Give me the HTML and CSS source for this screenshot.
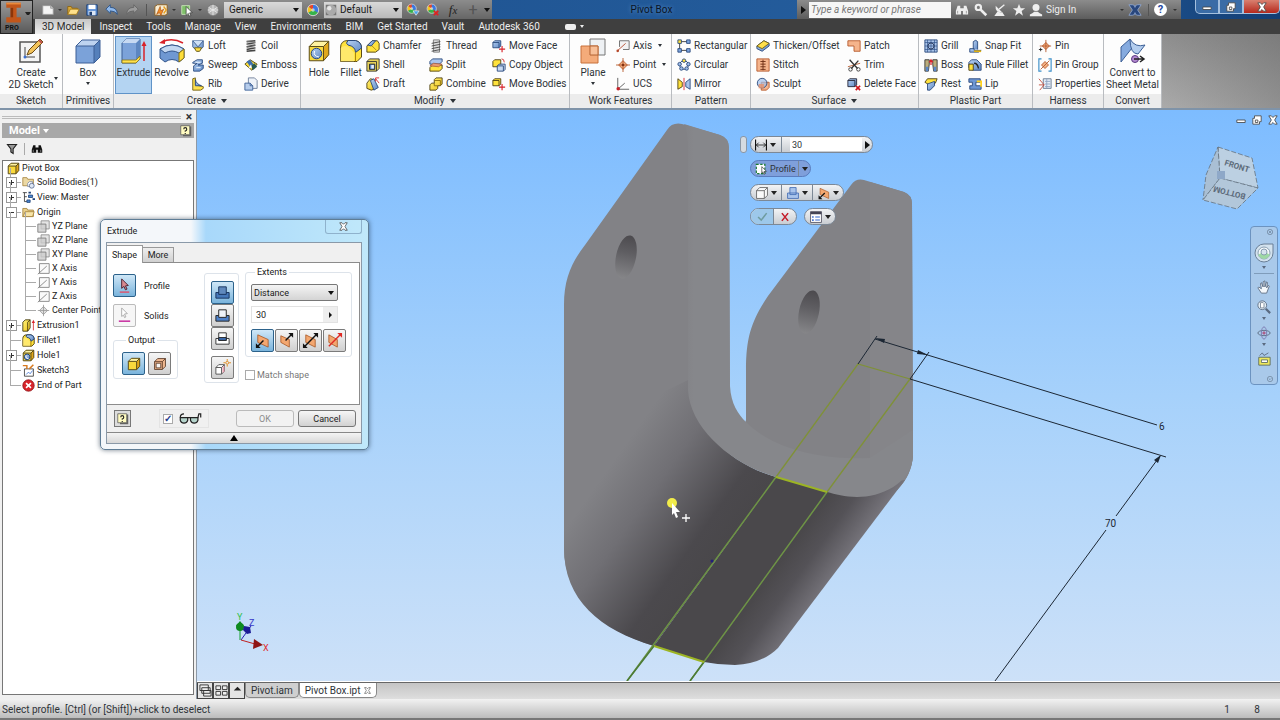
FILE: index.html
```html
<!DOCTYPE html>
<html lang="en">
<head>
    <meta charset="UTF-8">
    <meta name="viewport" content="width=device-width, initial-scale=1.0">
    <title>Pivot Box</title>
    <link rel="stylesheet" href="styles.css">
</head>
<body>
    <!-- Icon sprite -->
    <svg class="sprite" aria-hidden="true">
        <defs>
            <linearGradient id="gBlue" x1="0" y1="0" x2="1" y2="1"><stop offset="0" stop-color="#b9d2f2"/><stop offset="1" stop-color="#5d87c4"/></linearGradient>
            <linearGradient id="gYellow" x1="0" y1="0" x2="1" y2="1"><stop offset="0" stop-color="#fff27a"/><stop offset="1" stop-color="#eec41c"/></linearGradient>
        </defs>

        <symbol id="i-new" viewBox="0 0 16 16"><path d="M2 3h9l3 3v7H2z" fill="#f4f4f4" stroke="#999"/><path d="M11 3v3h3" fill="#ccc" stroke="#999"/></symbol>
        <symbol id="i-open" viewBox="0 0 16 16"><path d="M2 13V4h4l1 2h6v2" fill="#d9a93a" stroke="#8a6414"/><path d="M2 13l3-6h10l-3 6z" fill="#ffe08a" stroke="#a47a1c"/></symbol>
        <symbol id="i-save" viewBox="0 0 16 16"><path d="M2 2h12v12H2z" fill="#5b8fd6" stroke="#1f3f70"/><path d="M4 2h8v5H4z" fill="#fff"/><path d="M4 9h8v5H4z" fill="#dce6f4"/><path d="M5 10h3v4H5z" fill="#1f3f70"/></symbol>
        <symbol id="i-undo" viewBox="0 0 16 16"><path d="M1 7l5-5v3q8 0 8 8-2-4-8-4v3z" fill="#8fb8ea" stroke="#2a5288"/></symbol>
        <symbol id="i-redo" viewBox="0 0 16 16"><path d="M15 7l-5-5v3q-8 0-8 8 2-4 8-4v3z" fill="#9b9b9b" stroke="#666"/></symbol>
        <symbol id="i-update" viewBox="0 0 16 16"><path d="M1 4l3-2h11v11l-3 1H1z" fill="#f6ecd4" stroke="#8a5a1a"/><path d="M3 13l4-9 1 5 3-2-3 7-2-3z" fill="#f08a24" stroke="#a94a08" stroke-width=".7"/><path d="M11 4l3 4-3 4" fill="none" stroke="#e8a020" stroke-width="1.500"/></symbol>
        <symbol id="i-pick" viewBox="0 0 16 16"><path d="M2 3h9v10H2z" fill="#7fc06a" stroke="#c8e4b8"/><path d="M7 4l7 7-3 .3 1.500 3-2 .7-1-3-2.500 2z" fill="#fff" stroke="#333" stroke-width=".8"/></symbol>
        <symbol id="i-mat" viewBox="0 0 16 16"><circle cx="8" cy="8" r="6.500" fill="#b5b5b5" stroke="#777"/><path d="M3 5l10 6M3 11l10-6M8 2v12M2 8h12" stroke="#e9e9e9"/></symbol>
        <symbol id="i-wheel" viewBox="0 0 16 16"><path d="M8 8V1.500A6.500 6.500 0 0 1 13.600 11.200z" fill="#3c78e0"/><path d="M8 8l5.600 3.200A6.500 6.500 0 0 1 2.400 11.200z" fill="#35b34a"/><path d="M8 8l-5.600 3.200A6.500 6.500 0 0 1 3 4z" fill="#f4c520"/><path d="M8 8L3 4a6.500 6.500 0 0 1 5-2.500z" fill="#e8452a"/><circle cx="8" cy="8" r="6.500" fill="none" stroke="#ddd"/><circle cx="8" cy="8" r="2" fill="#fff" fill-opacity=".6"/></symbol>
        <symbol id="i-wheel-add" viewBox="0 0 16 16"><use href="#i-wheel" width="13" height="13"/><path d="M8 9h7l-3.500 5z" fill="#4aa3e8" stroke="#fff" stroke-width=".7"/></symbol>
        <symbol id="i-wheel-del" viewBox="0 0 16 16"><use href="#i-wheel" width="13" height="13"/><path d="M9 9l5 5m0-5l-5 5" stroke="#e02020" stroke-width="2"/></symbol>
        <symbol id="i-sphere" viewBox="0 0 16 16"><path d="M2 2h12v12H2z" fill="#777"/><circle cx="8" cy="8" r="6" fill="#aaa"/><circle cx="6" cy="6" r="2.500" fill="#e6e6e6"/></symbol>

        <symbol id="i-bino" viewBox="0 0 16 16"><path d="M3 3h3v3h4V3h3l2 6v4H9V9H7v4H1V9z" fill="currentColor"/><path d="M3 9v3M13 9v3" stroke="#999"/></symbol>
        <symbol id="i-key" viewBox="0 0 16 16"><circle cx="5" cy="5" r="3" fill="none" stroke="currentColor" stroke-width="2.500"/><path d="M7 7l7 7" stroke="currentColor" stroke-width="3"/></symbol>
        <symbol id="i-dish" viewBox="0 0 16 16"><path d="M3 3q-1 8 8 8z" fill="currentColor"/><path d="M7 7l6-5M6 10l-3 4h9l-2-3" stroke="currentColor" stroke-width="1.500" fill="currentColor"/></symbol>
        <symbol id="i-star" viewBox="0 0 16 16"><path d="M8 1l2 5h5l-4 3 1.500 5.500L8 11l-4.500 3.500L5 9 1 6h5z" fill="currentColor"/></symbol>
        <symbol id="i-user" viewBox="0 0 16 16"><circle cx="8" cy="5" r="4" fill="currentColor"/><path d="M1 15v-2q3-1 5-3h4q2 2 5 3v2z" fill="currentColor"/></symbol>
        <symbol id="i-exchange" viewBox="0 0 16 16"><path d="M1 2h4q3 0 3 3 0-3 3-3h4l-4 6 4 6h-4q-3 0-3-3 0 3-3 3H1l4-6z" fill="#29477d" stroke="#9db6df" stroke-width=".8"/></symbol>

        <symbol id="i-sketch" viewBox="0 0 26 26"><path d="M2 4h20v20H2z" fill="#f4f4f4" stroke="#555" stroke-width="1.500"/><path d="M7 9v10h10" fill="none" stroke="#444"/><circle cx="7" cy="19" r="1.500" fill="#3b6fd0"/><path d="M9 17l2-5L22 1l3 3-11 11z" fill="#f2c25a" stroke="#6a4a14"/><path d="M21 2l3 3" stroke="#c05050" stroke-width="2"/></symbol>
        <symbol id="i-box" viewBox="0 0 26 26"><path d="M1 8l6-6h18v17l-6 6H1z" fill="#7ba2d9"/><path d="M1 8l6-6h18l-6 6z" fill="#bdd3f0"/><path d="M19 8l6-6v17l-6 6z" fill="#5580bb"/><path d="M1 8l6-6h18v17l-6 6H1zM1 8h18v17M19 8l6-6" fill="none" stroke="#3c5f96"/></symbol>
        <symbol id="i-extrude" viewBox="0 0 26 26"><path d="M1 5l4-4h14v20l-4 4H1z" fill="#7ba2d9" stroke="#3c5f96"/><path d="M15 5l4-4v20l-4 4z" fill="#5c86c0"/><path d="M1 5l4-4h14l-4 4z" fill="#c6d9f2"/><path d="M1 22h14l4-4v3l-4 4H1z" fill="#ffe14c" stroke="#8a7312" stroke-width=".8"/><path d="M23 23V6" stroke="#d8232a" stroke-width="1.500"/><path d="M20.500 8L23 3l2.500 5z" fill="#d8232a"/></symbol>
        <symbol id="i-revolve" viewBox="0 0 26 26"><path d="M1 11q12-8 24 0v9l-5 4q-7-5-14 0l-5-4z" fill="#6f98d2" stroke="#33568c"/><path d="M1 11q12-8 24 0l-5 4q-7-4-14 0z" fill="#c4d8f1" stroke="#33568c"/><path d="M20 15l5-4v9l-5 4z" fill="#ffdf3a" stroke="#8a7312"/><path d="M3 4q10-5 21 1" fill="none" stroke="#d8232a" stroke-width="1.500"/><path d="M0 5l6-4v5z" fill="#d8232a"/></symbol>
        <symbol id="i-loft" viewBox="0 0 16 16"><path d="M2 2h12v7l-5 5H7L2 9z" fill="url(#gBlue)" stroke="#33568c"/><path d="M4 10h8l-2 4H6z" fill="#ffe14c" stroke="#756010"/><path d="M2 2l6 7 6-7" fill="#cfe0f5" stroke="#33568c"/></symbol>
        <symbol id="i-sweep" viewBox="0 0 16 16"><path d="M2 5l5-3h6v4L8 8h6v4l-4 3H3V9l4-3H2z" fill="url(#gBlue)" stroke="#28487c"/><path d="M5 5h6M6 11h5" stroke="#d9e7f8" stroke-width="1.500"/></symbol>
        <symbol id="i-rib" viewBox="0 0 16 16"><path d="M2 2l3-1v8l9 2v2l-3 2H2z" fill="#ffe14c" stroke="#6d5a10"/><path d="M5 3q1 5 7 7H5z" fill="url(#gBlue)" stroke="#28487c"/></symbol>
        <symbol id="i-coil" viewBox="0 0 16 16"><path d="M3 3l10-1M3 6l10-2M3 9l10-2M3 12l10-2M3 14l10-1" stroke="#444" stroke-width="2"/><path d="M3 3l10 1M3 6l10 1M3 9l10 1" stroke="#999" stroke-width=".8"/></symbol>
        <symbol id="i-emboss" viewBox="0 0 16 16"><path d="M1 7l6-5 8 5-6 7z" fill="#ffdf3a" stroke="#4b4210"/><path d="M3 4l4-2 4 5-4 3z" fill="#3c6fb0"/><path d="M8 9l4-3 3 4-5 4z" fill="#2a5a50"/><path d="M5 12l3-5 1 4z" fill="#fff"/></symbol>
        <symbol id="i-derive" viewBox="0 0 16 16"><path d="M5 1h7l3 3v9H5z" fill="#eef2f8" stroke="#6a7a96"/><path d="M1 7h6l3 3v5H1z" fill="#b7cdec" stroke="#3c5f96"/><path d="M7 7v3h3" fill="none" stroke="#3c5f96"/></symbol>

        <symbol id="i-ybox" viewBox="0 0 16 16"><path d="M1.500 5l3.500-3.500h9.500v9L11 14.500H1.500z" fill="#f9d93c"/><path d="M1.500 5L5 1.500h9.500L11 5z" fill="#fff3a0"/><path d="M11 5l3.500-3.500v9L11 14.500z" fill="#e0a81c"/><path class="hair" d="M1.500 5L5 1.500h9.500v9L11 14.500H1.500zM1.500 5H11v9.500M11 5l3.500-3.500" fill="none" stroke="#5c4d18"/></symbol>
        <symbol id="i-hole" viewBox="0 0 16 16"><use href="#i-ybox" width="16" height="16"/><circle class="hair" cx="6.300" cy="9.700" r="3.500" fill="url(#gBlue)" stroke="#28487c"/><path class="hair" d="M5 8q-1 3.500 3 4" fill="none" stroke="#fff"/></symbol>
        <symbol id="i-fillet" viewBox="0 0 16 16"><path class="hair" d="M1 6q0-5 5-5h5q4 1 4 5v6l-3 3H1z" fill="#ffe23c" stroke="#5c4d18"/><path d="M1 6q2-2 5-1l4 4v6H1z" fill="#fff09a" fill-opacity=".5"/><path class="hair" d="M6 1h5q4 1 4 5l-4 3q0-4-5-5-2-1 0-3z" fill="url(#gBlue)" stroke="#28487c"/><path class="hair" d="M11 9v6" stroke="#a8840f"/></symbol>
        <symbol id="i-chamfer" viewBox="0 0 16 16"><path d="M1 8l6-6h6l2 3v7l-4 3H1z" fill="#ffe23c" stroke="#4a3d10"/><path d="M2 7l5-5h4L6 8z" fill="url(#gBlue)" stroke="#28487c"/><path d="M7 8l5 5" stroke="#a8840f"/></symbol>
        <symbol id="i-shell" viewBox="0 0 16 16"><path d="M1 4l3-3h11v11l-3 3H1z" fill="#e6d25a" stroke="#333"/><path d="M1 4h11v11" fill="none" stroke="#333"/><path d="M4 7h6v6H4z" fill="#5a88c8" stroke="#222"/><path d="M6 8h3v4H6z" fill="#e8eef8"/></symbol>
        <symbol id="i-draft" viewBox="0 0 16 16"><path d="M1 7l4-5 4 1v11l-3 1-5-2z" fill="url(#gYellow)" stroke="#4a3d10"/><path d="M5 4l4-2 5 10-5 3z" fill="url(#gBlue)" stroke="#28487c"/><path d="M11 2l4 5M11 5V1h4" stroke="#d8232a" fill="none"/></symbol>
        <symbol id="i-thread" viewBox="0 0 16 16"><path d="M5 1h7v14H5z" fill="#dcdcdc" stroke="#777"/><path d="M3 5l10-2M3 8l10-2M3 11l10-2M3 14l10-2" stroke="#444"/></symbol>
        <symbol id="i-split" viewBox="0 0 16 16"><path d="M1 11l3-3h11v4l-3 3H1z" fill="#ffe23c" stroke="#4a3d10"/><path d="M1 4l3-3h11v3l-3 3H1z" fill="#a8c4ec" stroke="#28487c"/><path d="M1 9l4-3 10 1-4 3z" fill="#e89a70" stroke="#9c4a26" stroke-width=".7"/></symbol>
        <symbol id="i-combine" viewBox="0 0 16 16"><path d="M1 9l2-2h3V3l2-2h7v7l-2 2h-3v3l-2 2H1z" fill="url(#gYellow)" stroke="#4a3d10"/><path d="M6 7v3h4M6 4h7v6" fill="none" stroke="#8a6d0c"/></symbol>
        <symbol id="i-moveface" viewBox="0 0 16 16"><path d="M1 4l2-2h7v6l-2 2H1z" fill="url(#gBlue)" stroke="#28487c"/><path d="M1 4h7v6" fill="none" stroke="#28487c"/><path d="M11.500 8v7M8 11.500h7" stroke="#d8232a" stroke-width="1.300"/></symbol>
        <symbol id="i-copyobj" viewBox="0 0 16 16"><path d="M1 4l2-2h7v6l-2 2H1z" fill="#ffe23c" stroke="#4a3d10"/><path d="M6 9l2-2h7v6l-2 2H6z" fill="#c7d9f2" stroke="#28487c"/><path d="M6 9h7v6" fill="none" stroke="#28487c"/><path d="M11 1q3 0 3 4" fill="none" stroke="#d8232a"/></symbol>
        <symbol id="i-movebody" viewBox="0 0 16 16"><path d="M1 4l2-2h7v6l-2 2H1z" fill="#ffe23c" stroke="#4a3d10"/><path d="M1 4h7v6" fill="none" stroke="#4a3d10"/><path d="M11.500 8v7M8 11.500h7" stroke="#d8232a" stroke-width="1.300"/></symbol>

        <symbol id="i-plane" viewBox="0 0 26 26"><path d="M10 1h15v16H10z" fill="#eef1f4" stroke="#777"/><path d="M1 8h17v17H1z" fill="#f3a26c" fill-opacity=".9" stroke="#c8703a"/><path d="M10 8h8v9h-8z" fill="#f7bf98" stroke="#b56434"/></symbol>
        <symbol id="i-axis" viewBox="0 0 16 16"><path d="M4 9V2h11v10H8" fill="#f2f2f2" stroke="#666"/><path d="M1 14L11 5" stroke="#b5482a"/><circle cx="2" cy="13.500" r="1.500" fill="#b5482a"/></symbol>
        <symbol id="i-point" viewBox="0 0 16 16"><path d="M8 3l5 5-5 5-5-5z" fill="#f4b183" stroke="#b5582a"/><path d="M8 0v16M0 8h16" stroke="#b5582a"/><circle cx="8" cy="8" r="1.500" fill="#803010"/></symbol>
        <symbol id="i-ucs" viewBox="0 0 16 16"><path d="M2 1v13h13M2 14l8-7" fill="none" stroke="#555"/><circle cx="2.500" cy="13.500" r="2" fill="#c82028"/></symbol>
        <symbol id="i-rect" viewBox="0 0 16 16"><path d="M4 3h8M3 4v8M4 13h8" stroke="#333"/><g fill="#7fa7e0" stroke="#28487c"><path d="M1 1h4v4H1z" fill="#ffe23c"/><path d="M11 1h4v4h-4zM1 11h4v4H1zM11 11h4v4h-4z"/></g></symbol>
        <symbol id="i-circ" viewBox="0 0 16 16"><circle cx="8" cy="8" r="5" fill="none" stroke="#28487c"/><g fill="#9fbde8" stroke="#28487c"><circle cx="8" cy="3" r="2" fill="#ffe23c"/><circle cx="13" cy="7" r="2"/><circle cx="3" cy="7" r="2"/><circle cx="5" cy="12" r="2"/><circle cx="11" cy="12" r="2"/></g></symbol>
        <symbol id="i-mirror" viewBox="0 0 16 16"><path d="M1 2l5 4v5l-5 3z" fill="#ffe23c" stroke="#4a3d10"/><path d="M15 2l-5 4v5l5 3z" fill="#a8c4ec" stroke="#28487c"/><path d="M8 1v14" stroke="#d8232a"/></symbol>

        <symbol id="i-thicken" viewBox="0 0 16 16"><path d="M1 8l8-6 6 3v3l-8 6-6-3z" fill="url(#gBlue)" stroke="#28487c"/><path d="M1 8l8-6 6 3-8 6z" fill="#ffdf4a" stroke="#6d5a10"/></symbol>
        <symbol id="i-stitch" viewBox="0 0 16 16"><path d="M1 1h14v14H1z" fill="#f5b48c" stroke="#b5582a"/><path d="M8 2v12M5 4h6M5 7h6M5 10h6M5 13h6" stroke="#6a2a10"/></symbol>
        <symbol id="i-sculpt" viewBox="0 0 16 16"><path d="M6 6h9v6l-3 3H6z" fill="#f5b48c" stroke="#b5582a"/><circle cx="7" cy="7" r="5.500" fill="#9fbde8" fill-opacity=".7" stroke="#28487c"/><path d="M3 8h6v5H3z" fill="#e9926a" fill-opacity=".8"/></symbol>
        <symbol id="i-patch" viewBox="0 0 16 16"><path d="M1 2h14v12H8V8H1z" fill="#f5b48c" stroke="#b5582a"/></symbol>
        <symbol id="i-trim" viewBox="0 0 16 16"><path d="M1 10l14-4" stroke="#b5582a"/><path d="M3 2l9 10M13 3L5 12" stroke="#333" stroke-width="1.500"/><circle cx="4" cy="13" r="2" fill="none" stroke="#333"/><circle cx="13" cy="13" r="2" fill="none" stroke="#333"/></symbol>
        <symbol id="i-delface" viewBox="0 0 16 16"><path d="M1 4l2-2h8v7l-2 2H1z" fill="url(#gBlue)" stroke="#223"/><path d="M1 4h8v7" fill="none" stroke="#223"/><path d="M10 10l5 5m0-5l-5 5" stroke="#d01820" stroke-width="2"/></symbol>

        <symbol id="i-grill" viewBox="0 0 16 16"><path d="M1 1h14v14H1z" fill="#a8c2e8" stroke="#28487c"/><path d="M4 1v14M8 1v14M12 1v14M1 4h14M1 8h14M1 12h14" stroke="#33568c" stroke-width=".8"/><circle cx="8" cy="8" r="3.500" fill="none" stroke="#1c2c50"/></symbol>
        <symbol id="i-boss" viewBox="0 0 16 16"><path d="M1 2h5v5l-1 8H1zM10 2h5v13h-4l-1-8z" fill="#bcae7c" stroke="#333"/><path d="M2 10h3v5H2zM11 10h3v5h-3z" fill="#5a88c8"/><path d="M8 8V3M6 5l2-3 2 3" stroke="#d8232a" stroke-width="1.400" fill="none"/></symbol>
        <symbol id="i-rest" viewBox="0 0 16 16"><path d="M1 6l3-4h11l-2 5-7 2z" fill="#ffe23c" stroke="#4a3d10"/><path d="M4 8l8-3v5l-5 5H4z" fill="url(#gBlue)" stroke="#28487c"/></symbol>
        <symbol id="i-snap" viewBox="0 0 16 16"><path d="M6 12V3q3-3 5 0v9" fill="url(#gBlue)" stroke="#28487c"/><path d="M2 11h5v2h8l-3 2H2z" fill="#9fbde8" stroke="#28487c"/><path d="M7 14h8" stroke="#e0b010" stroke-width="2"/></symbol>
        <symbol id="i-rule" viewBox="0 0 16 16"><path d="M1 5l3-3h6l5 5v7H6l-5-3z" fill="url(#gBlue)" stroke="#28487c"/><path d="M1 7h5v7H1z" fill="#ffe23c" stroke="#4a3d10"/><path d="M7 6q4 0 5 6" fill="none" stroke="#222" stroke-width="1.500"/></symbol>
        <symbol id="i-lip" viewBox="0 0 16 16"><path d="M1 2h13v4H9v4h6v4H2v-4h3V6H1z" fill="#6e97d4" stroke="#28487c"/><path d="M10 5h5v6" fill="none" stroke="#ffd21c" stroke-width="2"/></symbol>
        <symbol id="i-pin" viewBox="0 0 16 16"><path d="M9 4l4 4-4 4-4-4z" fill="#f4b183" stroke="#b5582a"/><path d="M9 1v14M2 8h13" stroke="#b5582a"/><path d="M1 12h4M3 10v4" stroke="#222"/></symbol>
        <symbol id="i-pingroup" viewBox="0 0 16 16"><path d="M4 1H1v14h3M12 1h3v14h-3" fill="none" stroke="#3c8fc8" stroke-width="1.300"/><path d="M8 4l4 4-4 4-4-4z" fill="#f4b183" stroke="#b5582a"/><path d="M3 13L13 3" stroke="#b5582a"/></symbol>
        <symbol id="i-props" viewBox="0 0 16 16"><path d="M6 2h9v11H6z" fill="#e6ecf5" stroke="#66788f"/><path d="M8 5h6M8 8h6M8 11h6M10 2v11" stroke="#8fa3c4"/><path d="M1 2l6 7-5 6M1 9h6" fill="none" stroke="#c04a3a"/></symbol>
        <symbol id="i-sheet" viewBox="0 0 26 26"><path d="M1 9L10 1l2 9L1 24z" fill="#86abdf" stroke="#3c5f96"/><path d="M10 1q5 9 15 6l-7 9q-8 0-8-15z" fill="#b3cdee" stroke="#3c5f96"/><circle cx="15" cy="21" r="3.500" fill="#b48ad0" stroke="#5a3a80"/><path d="M14 21h9M20 18l4 3-4 3" fill="none" stroke="#222" stroke-width="1.500"/></symbol>

        <symbol id="i-folder" viewBox="0 0 16 16"><path d="M1 13V3h5l1 2h7v8z" fill="#e9d08c" stroke="#a4813a"/><path d="M1 13l3-6h11l-2 6z" fill="#f7e4a8" stroke="#a4813a"/></symbol>
        <symbol id="i-bodies" viewBox="0 0 16 16"><path d="M1 12V2h5l1 2h7v8z" fill="#ecd9a4" stroke="#a4813a"/><path d="M7 9l2-2h4v6H7z" fill="#fff" stroke="#7c8aa6"/><circle cx="12" cy="12" r="3" fill="#dfe8f5" stroke="#56688c"/></symbol>
        <symbol id="i-view" viewBox="0 0 16 16"><path d="M1 2h5M3 2v11h3M3 7h3" stroke="#333" fill="none"/><path d="M8 5h5v3H8zM6 11h4v3H6z" fill="#4f8bd6" stroke="#1e4278"/><path d="M13 10h3M8 2h3" stroke="#1e4278" stroke-width="2"/></symbol>
        <symbol id="i-gplane" viewBox="0 0 16 16"><path d="M5 1h10v10H5z" fill="#e4e4e4" stroke="#888"/><path d="M1 5h10v10H1z" fill="#ccc" fill-opacity=".8" stroke="#777"/></symbol>
        <symbol id="i-gaxis" viewBox="0 0 16 16"><path d="M3 2h12v12H3z" fill="#fafafa" stroke="#777"/><path d="M1 15L12 5" stroke="#777"/></symbol>
        <symbol id="i-gpoint" viewBox="0 0 16 16"><path d="M8 3l5 5-5 5-5-5z" fill="#e0e0e0" stroke="#999"/><path d="M8 1v14M1 8h14" stroke="#999"/></symbol>
        <symbol id="i-textr" viewBox="0 0 16 16"><path d="M1 4l3-3h6v10l-3 4H1z" fill="url(#gYellow)" stroke="#332b08"/><path d="M7 4v11M7 4l3-3" stroke="#332b08"/><path d="M14 14V4" stroke="#d8232a"/><path d="M12 5l2-4 2 4z" fill="#d8232a"/></symbol>
        <symbol id="i-tsketch" viewBox="0 0 16 16"><path d="M3 6h11v9H3z" fill="#fff" stroke="#333"/><path d="M5 13l3-3 2 2 3-4" fill="none" stroke="#3b6fd0"/><path d="M1 2h5v4M9 6l5-5" stroke="#d87a20" stroke-width="1.800" fill="none"/></symbol>
        <symbol id="i-end" viewBox="0 0 16 16"><circle cx="8" cy="8" r="7" fill="#d9262c" stroke="#8c1014"/><path d="M5 5l6 6m0-6l-6 6" stroke="#fff" stroke-width="2"/></symbol>
        <symbol id="i-filter" viewBox="0 0 16 16"><path d="M2 2h12L9.500 8v6L6.500 12V8z" fill="#999" stroke="#222" stroke-width="1.500"/></symbol>
        <symbol id="i-help" viewBox="0 0 16 16"><path d="M4 2h11v13H4z" fill="#666"/><path d="M1 1h12v12H1z" fill="#fffbc0" stroke="#555"/><path d="M5 5.500q0-2 2-2t2 2-2 2.500v1M7 10.500v1.500" fill="none" stroke="#222" stroke-width="1.500"/></symbol>

        <symbol id="i-cursor" viewBox="0 0 18 18"><path d="M6 2l7 7-3 .4 1.700 3.400-1.700.7L8.400 10 6 12z" fill="#d98a90" stroke="#4a2030"/><path d="M4 16h10" stroke="#e0506a" stroke-width="1.500"/></symbol>
        <symbol id="i-cursor-off" viewBox="0 0 18 18"><path d="M6 1l6 6-3 .4 1.500 3.100-1.500.7L8 8.600 6 10z" fill="#fff" stroke="#aaa"/><path d="M3 15h12" stroke="#c4209a" stroke-width="1.500"/></symbol>
        <symbol id="i-join" viewBox="0 0 18 18"><path d="M2 9h14v6H2z" fill="#4577b8" stroke="#16325c"/><path d="M5 3h8v8H5z" fill="#6089bd" stroke="#16325c"/></symbol>
        <symbol id="i-cut" viewBox="0 0 18 18"><path d="M2 9h14v6H2z" fill="#4d80c8" stroke="#222"/><path d="M5 3h8v8H5z" fill="#eef2f8" stroke="#222"/></symbol>
        <symbol id="i-intersect" viewBox="0 0 18 18"><path d="M2 9h14v6H2zM5 3h8v8H5z" fill="#fff" stroke="#333"/><path d="M5 8h8v3H5z" fill="#3d6fb4" stroke="#222"/></symbol>
        <symbol id="i-newsolid" viewBox="0 0 18 18"><path d="M2 9l3-3h6v7l-3 3H2zM2 9h6v7M8 9l3-3" fill="#fff" stroke="#555"/><path d="M9 9l2-2v6l-2 2z" fill="#e8a0b0"/><circle cx="14" cy="4" r="1.500" fill="none" stroke="#e08a20"/><path d="M14 0v2M14 6v2M10 4h2M16 4h2" stroke="#e08a20"/></symbol>
        <symbol id="i-surf" viewBox="0 0 18 18"><path d="M2 6l4-4h10v10l-4 4H2z" fill="#f0b890" stroke="#4a2a18"/><path d="M4 8h6v6H4z" fill="#f8f4f0" stroke="#4a2a18"/><path d="M2 6h10v10M12 6l4-4" fill="none" stroke="#4a2a18"/></symbol>
        <symbol id="i-dir1" viewBox="0 0 18 18"><path d="M4 3l11 5v8L4 11z" fill="#f3a770" stroke="#a4501c" stroke-width=".8"/><path d="M10 9l-6 6" stroke="#111" stroke-width="1.500"/><path d="M2 17v-5l5 5z" fill="#111"/></symbol>
        <symbol id="i-dir2" viewBox="0 0 18 18"><path d="M3 4l9 4v8L3 11z" fill="#f3a770" stroke="#a4501c" stroke-width=".8"/><path d="M8 9l6-6" stroke="#111" stroke-width="1.500"/><path d="M16 1v5l-5-5z" fill="#111"/></symbol>
        <symbol id="i-dir3" viewBox="0 0 18 18"><path d="M4 3l10 5v8L4 11z" fill="#f3a770" stroke="#a4501c" stroke-width=".8"/><path d="M3 15L15 3" stroke="#111" stroke-width="1.500"/><path d="M17 1v5l-5-5zM1 17v-5l5 5z" fill="#111"/></symbol>
        <symbol id="i-dir4" viewBox="0 0 18 18"><path d="M3 3l9 5v8L3 11z" fill="#f3a770" stroke="#a4501c" stroke-width=".8"/><path d="M3 15L15 3" stroke="#e02a24" stroke-width="1.500"/><path d="M17 1v5l-5-5z" fill="#e02a24"/></symbol>
        <symbol id="i-glasses" viewBox="0 0 26 14"><path d="M2 6h8v3q-1 3-4 3t-4-3zM13 6h8v3q-1 3-4 3t-4-3z" fill="#b5d4cc" stroke="#222" stroke-width="1.300"/><path d="M10 6h3M2 6q0-4 4-4M21 6l1-4h2v4" fill="none" stroke="#222" stroke-width="1.300"/></symbol>
        <symbol id="i-dim" viewBox="0 0 18 18"><path d="M2 2v14M16 2v14" stroke="#111" stroke-width="1.500"/><path d="M3 9h12M6 6L3 9l3 3M12 6l3 3-3 3" fill="none" stroke="#111"/></symbol>
        <symbol id="i-sel" viewBox="0 0 18 18"><path d="M3 3h11v12H3z" fill="#fff" stroke="#1c7a30" stroke-width="1.500" stroke-dasharray="3 2"/><path d="M10 6l6 6-3 .3 1.300 2.700-1.500.7-1.300-3-1.500 1.500z" fill="#fff" stroke="#222" stroke-width=".8"/></symbol>
        <symbol id="i-wbox" viewBox="0 0 18 18"><path d="M2 6l4-4h10v10l-4 4H2zM2 6h10v10M12 6l4-4" fill="#fafafa" stroke="#555"/></symbol>
        <symbol id="i-bjoin" viewBox="0 0 18 18"><path d="M2 9h14v7H2zM5 2h8v9H5z" fill="#a9c4ec" stroke="#3b66b0"/></symbol>
        <symbol id="i-opts" viewBox="0 0 18 18"><path d="M2 2h14v14H2z" fill="#fff" stroke="#445"/><path d="M2 4h14" stroke="#445" stroke-width="3"/><path d="M8 9h6M8 13h6" stroke="#36c" stroke-width="1.300"/><path d="M4 8h2v2H4zM4 12h2v2H4z" fill="#36c"/></symbol>
        <symbol id="i-winx" viewBox="0 0 12 12"><path d="M1 1h3l2 2 2-2h3L8 6l3 5H8L6 9l-2 2H1l3-5z" fill="#fff" stroke="#444"/></symbol>
        <symbol id="i-wmin" viewBox="0 0 12 12"><path d="M1 6h10v3H1z" fill="#fff" stroke="#444"/></symbol>
        <symbol id="i-wmax" viewBox="0 0 12 12"><path d="M3 1h8v7H9v3H1V4h2z" fill="#fff" stroke="#444"/><path d="M4 6h3v3H4z" fill="#fff" stroke="#444"/></symbol>
    </svg>

    <div class="app">
        <header class="header">
            <button class="app-menu" aria-label="Application menu">
                <svg class="app-logo" viewBox="0 0 24 28"><path d="M3 2h17v6h-5v11h5v6H3v-6h5V8H3z" fill="#c2561a"/><path d="M8 8h3v11H8z" fill="#8c3508"/><path d="M3 2h17v2H3z" fill="#ea8a3c"/></svg>
                <span class="caret"></span>
                <span class="pro">PRO</span>
            </button>
            <div class="bars">
                <!-- Title bar -->
                <div class="titlebar">
                    <div class="quick">
                        <button class="ico" aria-label="New"><svg><use href="#i-new"/></svg></button>
                        <span class="dot-caret"></span>
                        <button class="ico" aria-label="Open"><svg><use href="#i-open"/></svg></button>
                        <button class="ico" aria-label="Save"><svg><use href="#i-save"/></svg></button>
                        <button class="ico" aria-label="Undo"><svg><use href="#i-undo"/></svg></button>
                        <button class="ico" aria-label="Redo"><svg><use href="#i-redo"/></svg></button>
                        <span class="vline"></span>
                        <button class="ico" aria-label="Update"><svg><use href="#i-update"/></svg></button>
                        <span class="dot-caret"></span>
                        <button class="ico" aria-label="Select"><svg><use href="#i-pick"/></svg></button>
                        <span class="dot-caret"></span>
                        <button class="ico" aria-label="Material"><svg><use href="#i-mat"/></svg></button>
                        <span class="combo"><select aria-label="Material"><option>Generic</option></select></span>
                        <button class="ico" aria-label="Appearance"><svg><use href="#i-wheel"/></svg></button>
                        <span class="combo with-icon"><svg><use href="#i-sphere"/></svg><select aria-label="Appearance"><option>Default</option></select></span>
                        <button class="ico" aria-label="Adjust"><svg><use href="#i-wheel-add"/></svg></button>
                        <button class="ico" aria-label="Clear"><svg><use href="#i-wheel-del"/></svg></button>
                        <button class="ico fx" aria-label="Parameters">f<sub>x</sub></button>
                        <button class="ico cross" aria-label="Add">+</button>
                        <span class="caret dark"></span>
                    </div>
                    <div class="doc-title">Pivot Box</div>
                    <div class="info">
                        <span class="arrow-right"></span>
                        <input class="search" type="text" placeholder="Type a keyword or phrase" aria-label="Search help">
                        <button class="ico" aria-label="Search"><svg><use href="#i-bino"/></svg></button>
                        <button class="ico" aria-label="Subscription"><svg><use href="#i-key"/></svg></button>
                        <button class="ico" aria-label="Communication"><svg><use href="#i-dish"/></svg></button>
                        <button class="ico" aria-label="Favorites"><svg><use href="#i-star"/></svg></button>
                        <button class="signin"><svg><use href="#i-user"/></svg>Sign In</button>
                        <span class="dot-caret"></span>
                        <button class="ico" aria-label="Exchange"><svg><use href="#i-exchange"/></svg></button>
                        <span class="vline"></span>
                        <button class="help-round" aria-label="Help">?</button>
                        <span class="dot-caret"></span>
                    </div>
                    <div class="window-buttons">
                        <button aria-label="Minimize"><svg><use href="#i-wmin"/></svg></button>
                        <button aria-label="Restore"><svg><use href="#i-wmax"/></svg></button>
                        <button class="close" aria-label="Close"><svg><use href="#i-winx"/></svg></button>
                    </div>
                </div>
                <!-- Ribbon tabs -->
                <nav class="tabs">
                    <a class="active" href="#">3D Model</a>
                    <a href="#">Inspect</a>
                    <a href="#">Tools</a>
                    <a href="#">Manage</a>
                    <a href="#">View</a>
                    <a href="#">Environments</a>
                    <a href="#">BIM</a>
                    <a href="#">Get Started</a>
                    <a href="#">Vault</a>
                    <a href="#">Autodesk 360</a>
                    <button class="ribbon-toggle" aria-label="Minimize ribbon"><span></span></button>
                </nav>
            </div>
        </header>

        <!-- Ribbon -->
        <div class="ribbon">
            <section class="panel p-sketch">
                <div class="tools">
                    <button class="big"><svg><use href="#i-sketch"/></svg>Create<br>2D Sketch<span class="caret side"></span></button>
                </div>
                <h2>Sketch</h2>
            </section>
            <section class="panel p-prim">
                <div class="tools">
                    <button class="big"><svg><use href="#i-box"/></svg>Box<span class="caret"></span></button>
                </div>
                <h2>Primitives</h2>
            </section>
            <section class="panel p-create">
                <div class="tools">
                    <button class="big selected"><svg><use href="#i-extrude"/></svg>Extrude</button>
                    <button class="big"><svg><use href="#i-revolve"/></svg>Revolve</button>
                    <div class="stack">
                        <button><svg><use href="#i-loft"/></svg>Loft</button>
                        <button><svg><use href="#i-sweep"/></svg>Sweep</button>
                        <button><svg><use href="#i-rib"/></svg>Rib</button>
                    </div>
                    <div class="stack">
                        <button><svg><use href="#i-coil"/></svg>Coil</button>
                        <button><svg><use href="#i-emboss"/></svg>Emboss</button>
                        <button><svg><use href="#i-derive"/></svg>Derive</button>
                    </div>
                </div>
                <h2>Create <span class="caret"></span></h2>
            </section>
            <section class="panel p-modify">
                <div class="tools">
                    <button class="big"><svg><use href="#i-hole"/></svg>Hole</button>
                    <button class="big"><svg><use href="#i-fillet"/></svg>Fillet</button>
                    <div class="stack">
                        <button><svg><use href="#i-chamfer"/></svg>Chamfer</button>
                        <button><svg><use href="#i-shell"/></svg>Shell</button>
                        <button><svg><use href="#i-draft"/></svg>Draft</button>
                    </div>
                    <div class="stack">
                        <button><svg><use href="#i-thread"/></svg>Thread</button>
                        <button><svg><use href="#i-split"/></svg>Split</button>
                        <button><svg><use href="#i-combine"/></svg>Combine</button>
                    </div>
                    <div class="stack">
                        <button><svg><use href="#i-moveface"/></svg>Move Face</button>
                        <button><svg><use href="#i-copyobj"/></svg>Copy Object</button>
                        <button><svg><use href="#i-movebody"/></svg>Move Bodies</button>
                    </div>
                </div>
                <h2>Modify <span class="caret"></span></h2>
            </section>
            <section class="panel p-work">
                <div class="tools">
                    <button class="big"><svg><use href="#i-plane"/></svg>Plane<span class="caret"></span></button>
                    <div class="stack">
                        <button><svg><use href="#i-axis"/></svg>Axis<span class="caret"></span></button>
                        <button><svg><use href="#i-point"/></svg>Point<span class="caret"></span></button>
                        <button><svg><use href="#i-ucs"/></svg>UCS</button>
                    </div>
                </div>
                <h2>Work Features</h2>
            </section>
            <section class="panel p-pattern">
                <div class="tools">
                    <div class="stack">
                        <button><svg><use href="#i-rect"/></svg>Rectangular</button>
                        <button><svg><use href="#i-circ"/></svg>Circular</button>
                        <button><svg><use href="#i-mirror"/></svg>Mirror</button>
                    </div>
                </div>
                <h2>Pattern</h2>
            </section>
            <section class="panel p-surface">
                <div class="tools">
                    <div class="stack">
                        <button><svg><use href="#i-thicken"/></svg>Thicken/Offset</button>
                        <button><svg><use href="#i-stitch"/></svg>Stitch</button>
                        <button><svg><use href="#i-sculpt"/></svg>Sculpt</button>
                    </div>
                    <div class="stack">
                        <button><svg><use href="#i-patch"/></svg>Patch</button>
                        <button><svg><use href="#i-trim"/></svg>Trim</button>
                        <button><svg><use href="#i-delface"/></svg>Delete Face</button>
                    </div>
                </div>
                <h2>Surface <span class="caret"></span></h2>
            </section>
            <section class="panel p-plastic">
                <div class="tools">
                    <div class="stack">
                        <button><svg><use href="#i-grill"/></svg>Grill</button>
                        <button><svg><use href="#i-boss"/></svg>Boss</button>
                        <button><svg><use href="#i-rest"/></svg>Rest</button>
                    </div>
                    <div class="stack">
                        <button><svg><use href="#i-snap"/></svg>Snap Fit</button>
                        <button><svg><use href="#i-rule"/></svg>Rule Fillet</button>
                        <button><svg><use href="#i-lip"/></svg>Lip</button>
                    </div>
                </div>
                <h2>Plastic Part</h2>
            </section>
            <section class="panel p-harness">
                <div class="tools">
                    <div class="stack">
                        <button><svg><use href="#i-pin"/></svg>Pin</button>
                        <button><svg><use href="#i-pingroup"/></svg>Pin Group</button>
                        <button><svg><use href="#i-props"/></svg>Properties</button>
                    </div>
                </div>
                <h2>Harness</h2>
            </section>
            <section class="panel p-convert">
                <div class="tools">
                    <button class="big"><svg><use href="#i-sheet"/></svg>Convert to<br>Sheet Metal</button>
                </div>
                <h2>Convert</h2>
            </section>
        </div>

        <div class="main">
            <!-- Model browser -->
            <aside class="browser">
                <div class="grip"><span></span><button aria-label="Close browser">×</button></div>
                <div class="browser-head">Model <span class="caret"></span><button aria-label="Browser help"><svg><use href="#i-help"/></svg></button></div>
                <div class="browser-tools">
                    <button aria-label="Filter"><svg><use href="#i-filter"/></svg></button>
                    <button aria-label="Find"><svg><use href="#i-bino"/></svg></button>
                </div>
                <div class="tree">
                    <div class="node root"><svg><use href="#i-ybox"/></svg>Pivot Box</div>
                    <ul>
                        <li class="closed"><div class="node"><svg><use href="#i-bodies"/></svg>Solid Bodies(1)</div></li>
                        <li class="closed"><div class="node"><svg><use href="#i-view"/></svg>View: Master</div></li>
                        <li class="opened"><div class="node"><svg><use href="#i-folder"/></svg>Origin</div>
                            <ul>
                                <li><div class="node"><svg><use href="#i-gplane"/></svg>YZ Plane</div></li>
                                <li><div class="node"><svg><use href="#i-gplane"/></svg>XZ Plane</div></li>
                                <li><div class="node"><svg><use href="#i-gplane"/></svg>XY Plane</div></li>
                                <li><div class="node"><svg><use href="#i-gaxis"/></svg>X Axis</div></li>
                                <li><div class="node"><svg><use href="#i-gaxis"/></svg>Y Axis</div></li>
                                <li><div class="node"><svg><use href="#i-gaxis"/></svg>Z Axis</div></li>
                                <li><div class="node"><svg><use href="#i-gpoint"/></svg>Center Point</div></li>
                            </ul>
                        </li>
                        <li class="closed"><div class="node"><svg><use href="#i-textr"/></svg>Extrusion1</div></li>
                        <li><div class="node"><svg><use href="#i-fillet"/></svg>Fillet1</div></li>
                        <li class="closed"><div class="node"><svg><use href="#i-hole"/></svg>Hole1</div></li>
                        <li><div class="node"><svg><use href="#i-tsketch"/></svg>Sketch3</div></li>
                        <li><div class="node"><svg><use href="#i-end"/></svg>End of Part</div></li>
                    </ul>
                </div>
            </aside>

            <div class="workspace">
                <div class="viewport">
                    <!-- Part and sketch -->
                    <svg class="scene" viewBox="197 110 1083 572" preserveAspectRatio="xMinYMin meet">
                        <defs>
                            <linearGradient id="sideL" gradientUnits="userSpaceOnUse" x1="600" y1="480" x2="715" y2="562"><stop offset="0" stop-color="#828286"/><stop offset=".35" stop-color="#706f74"/><stop offset=".8" stop-color="#4b494d"/><stop offset="1" stop-color="#49474a"/></linearGradient>
                            <linearGradient id="sideR" gradientUnits="userSpaceOnUse" x1="768" y1="579" x2="814" y2="612"><stop offset="0" stop-color="#4a484b"/><stop offset=".4" stop-color="#545257"/><stop offset="1" stop-color="#7a787f"/></linearGradient>
                            <linearGradient id="hole" x1="0" y1="0" x2="0" y2="1"><stop offset="0" stop-color="#4c4a4e"/><stop offset=".4" stop-color="#5f5e62"/><stop offset="1" stop-color="#868689"/></linearGradient>
                            <linearGradient id="edge" gradientUnits="userSpaceOnUse" x1="682" y1="0" x2="694" y2="0"><stop offset="0" stop-color="#828286"/><stop offset="1" stop-color="#86878b"/></linearGradient>
                        </defs>
                        <path d="M746 420V370C746 336 752 320 768 296L851 185Q856 178 864 180L904 192Q912 195 912 204L913 455Q912 475 897 490L820 480L740 440z" fill="#828286"/>
                        <path d="M870 182L904 192Q912 195 912 204L913 455Q912 475 897 490L870 470z" fill="#858589"/>
                        <path d="M564 548V305C564 278 572 262 585 245L667 130Q672 122 682 124L720 135Q729 138 729 148L730 470L654 646C600 630 564 595 564 548z" fill="#828286"/>
                        <path d="M564 560V440L688 380C690 430 735 466 776 477L654 646C600 630 564 600 564 548z" fill="url(#sideL)"/>
                        <path d="M827 492L704 662Q719 665 735 665Q762 664 778 648L905 480z" fill="url(#sideR)"/>
                        <path d="M776 477L827 492L704 662L654 646z" fill="#4a484b"/>
                        <path d="M684 124L720 135Q729 138 729 148L730 386C731 404 738 414 746 422C775 452 830 460 870 458L913 430V455C911 485 880 497 857 497C845 497 835 494 827 492L776 477C735 466 690 430 688 390V150Q688 130 684 124z" fill="url(#edge)"/>
                        <ellipse cx="626" cy="257" rx="10" ry="22" transform="rotate(12 626 257)" fill="url(#hole)"/>
                        <ellipse cx="809" cy="312" rx="10" ry="22" transform="rotate(12 809 312)" fill="url(#hole)"/>
                        <path d="M776 477L858 364L910 379L827 492" fill="none" stroke="#7f9138" stroke-width="1.300"/>
                        <path d="M776 477L627 681M827 492L690 681" stroke="#6d9345" stroke-width="1.500"/>
                        <path d="M654 646L627 681M704 662L690 681" stroke="#4b7b35" stroke-width="1.500"/>
                        <path d="M776 477L827 492M654 646L704 662" stroke="#9cb424" stroke-width="2"/>
                        <circle cx="712" cy="561" r="1.500" fill="#22207a"/>
                        <path d="M858 364L877 336M910 379L929 352M875 339L1157 425M910 379L1166 457M1160 456L1116 516M1106 530L995 681" fill="none" stroke="#1c2734"/>
                        <path d="M875 338l10 1-1 4zM928 355l-10-5-1 4zM1161 455l-3 8-4-3z" fill="#1c2734"/>
                        <g class="dims"><text x="1159" y="430">6</text><text x="1105" y="527">70</text></g>
                        <!-- axis triad -->
                        <path d="M240 640V622" stroke="#12a02c"/><path d="M241 640l10-14" stroke="#2424b4"/><path d="M241 640l14 4" stroke="#c02020"/>
                        <circle cx="240" cy="627" r="4" fill="#0e8a20"/><path d="M240 621l4 5h-8z" fill="#0e8a20"/>
                        <path d="M244 626l6 1 1 6-4 1-4-4z" fill="#1c1c96"/>
                        <path d="M254 639l9 6-10 4z" fill="#8e1414"/>
                        <g class="triad"><text x="237" y="620" fill="#2fc04c">Y</text><text x="249" y="626" fill="#3838c8">Z</text><text x="263" y="651" fill="#e02828">X</text></g>
                        <!-- pointer -->
                        <circle cx="672" cy="503" r="5" fill="#f2ec4a"/>
                        <path d="M672 503l8 9h-4l2 5-2 1-2-5-2 2z" fill="#fff"/>
                        <path d="M686 514v8M682 518h8" stroke="#fff" stroke-width="1.300"/>
                    </svg>

                    <!-- In-canvas mini toolbar -->
                    <div class="mini">
                        <div class="mini-row">
                            <span class="mini-grip"></span>
                            <div class="pill value">
                                <button aria-label="Measure"><svg><use href="#i-dim"/></svg><span class="caret"></span></button>
                                <input type="text" value="30" aria-label="Distance">
                                <button class="more" aria-label="More"><span class="arrow-right"></span></button>
                            </div>
                        </div>
                        <div class="mini-row indent">
                            <div class="pill profile"><button><svg><use href="#i-sel"/></svg>Profile</button><button aria-label="Profile options"><span class="caret"></span></button></div>
                        </div>
                        <div class="mini-row indent">
                            <div class="pill">
                                <button aria-label="Output"><svg><use href="#i-wbox"/></svg><span class="caret"></span></button>
                                <button aria-label="Operation"><svg><use href="#i-bjoin"/></svg><span class="caret"></span></button>
                                <button aria-label="Direction"><svg><use href="#i-dir1"/></svg><span class="caret"></span></button>
                            </div>
                        </div>
                        <div class="mini-row indent">
                            <div class="pill confirm">
                                <button class="off" aria-label="OK"><svg viewBox="0 0 18 18"><path d="M4 9l4 4 7-9" fill="none" stroke="#6f9ca0" stroke-width="2"/></svg></button>
                                <button aria-label="Cancel"><svg viewBox="0 0 18 18"><path d="M5 4l8 10M13 4L5 14" stroke="#c41c28" stroke-width="2"/></svg></button>
                            </div>
                            <div class="pill"><button aria-label="Options"><svg><use href="#i-opts"/></svg><span class="caret"></span></button></div>
                        </div>
                    </div>

                    <div class="doc-buttons">
                        <button aria-label="Minimize"><svg><use href="#i-wmin"/></svg></button>
                        <button aria-label="Restore"><svg><use href="#i-wmax"/></svg></button>
                        <button aria-label="Close"><svg><use href="#i-winx"/></svg></button>
                    </div>

                    <svg class="viewcube" viewBox="0 0 60 68">
                        <g stroke="#66727e" stroke-dasharray="5 2" stroke-width=".8">
                            <path d="M18 3L52 14L58 44L20 34z" fill="#bcd0e2"/>
                            <path d="M18 3L20 34L3 56L6 31z" fill="#a9bfd4"/>
                            <path d="M20 34L58 44L37 65L3 56z" fill="#b2c7da"/>
                        </g>
                        <path d="M17 27h8v8h-8z" fill="#8ea8c8"/>
                        <text transform="translate(24 21) rotate(17)">FRONT</text>
                        <text transform="translate(46 50) rotate(194)">BOTTOM</text>
                    </svg>

                    <div class="navbar">
                        <button aria-label="Close bar"><svg viewBox="0 0 12 12"><circle cx="6" cy="6" r="4" fill="none" stroke="#6a7f96"/><path d="M4 4l4 4m0-4L4 8" stroke="#6a7f96"/></svg></button>
                        <button class="wheel" aria-label="Steering wheel"><svg viewBox="0 0 20 20"><path d="M10 1h9v9a9 9 0 1 1-9-9z" fill="#d3e2ee" stroke="#6a7f96"/><circle cx="10" cy="10" r="6" fill="#f4f8fa" stroke="#8a9fb2"/><path d="M4 12q6 8 12 0l-3-2H7z" fill="#9ed8a4"/><circle cx="10" cy="9" r="3" fill="#d8e4ee" stroke="#8a9fb2"/></svg><span class="caret"></span></button>
                        <hr>
                        <button aria-label="Pan"><svg viewBox="0 0 16 16"><path d="M5 15L1 9l1-1 3 2-1-6 1-1 2 5V2l2-1v7l2-6 1 1-1 6 2-3 1 1-3 8z" fill="#f4f8fb" stroke="#5a6a80"/></svg></button>
                        <button aria-label="Zoom"><svg viewBox="0 0 16 16"><circle cx="6" cy="6" r="5" fill="#e4eef6" stroke="#5a6a80"/><path d="M4 3h3l1 1v5H4z" fill="#fff" stroke="#5a6a80" stroke-width=".8"/><path d="M10 10l5 5" stroke="#5a6a80" stroke-width="2.500"/></svg><span class="caret"></span></button>
                        <button aria-label="Orbit"><svg viewBox="0 0 16 16"><ellipse cx="8" cy="8" rx="7" ry="3" fill="none" stroke="#5a6a80"/><ellipse cx="8" cy="8" rx="3" ry="7" fill="none" stroke="#7a78b0"/><path d="M8 6v4M6 8h4" stroke="#b03060"/></svg><span class="caret"></span></button>
                        <button aria-label="Look at"><svg viewBox="0 0 16 16"><path d="M2 6h13v9H2z" fill="#eee85c" stroke="#5a6a60"/><path d="M5 9h7v3H5z" fill="#fff" stroke="#5a6a60"/><path d="M3 4l3-3 2 3 5-3" fill="none" stroke="#5a6a80"/></svg></button>
                        <button class="last" aria-label="Customize"><svg viewBox="0 0 12 12"><circle cx="6" cy="6" r="4" fill="none" stroke="#6a7f96"/><path d="M4 5l2 2 2-2" fill="none" stroke="#6a7f96"/></svg></button>
                    </div>
                </div>

                <!-- Document tabs -->
                <div class="doc-tabs">
                    <button class="sq" aria-label="Cascade"><svg viewBox="0 0 14 14"><path d="M1 1h9v6H1z M3 4h9v6H3zM5 7h8v6H5z" fill="#eee" stroke="#333"/></svg></button>
                    <button class="sq" aria-label="Tile"><svg viewBox="0 0 14 14"><path d="M1 2h5v4H1zM8 2h5v4H8zM1 8h5v4H1zM8 8h5v4H8z" fill="#eee" stroke="#333"/></svg></button>
                    <button class="sq" aria-label="Show tabs"><svg viewBox="0 0 14 14"><path d="M3 7l4-4 4 4z" fill="#222"/></svg></button>
                    <a href="#">Pivot.iam</a>
                    <a class="active" href="#">Pivot Box.ipt <svg viewBox="0 0 12 12"><use href="#i-winx"/></svg></a>
                </div>
            </div>
        </div>

        <footer class="status">
            <span class="message">Select profile. [Ctrl] (or [Shift])+click to deselect</span>
            <span class="count">1</span>
            <span class="count">8</span>
        </footer>

        <!-- Extrude dialog -->
        <form class="dialog">
            <div class="dialog-title">Extrude<button type="button" aria-label="Close dialog"><svg><use href="#i-winx"/></svg></button></div>
            <div class="dialog-inner">
                <div class="dialog-tabs">
                    <button type="button" class="active">Shape</button>
                    <button type="button">More</button>
                </div>
                <div class="dialog-body">
                    <div class="col-left">
                        <div class="pick-row"><button type="button" id="pickProfile" class="tool on"><svg><use href="#i-cursor"/></svg></button><label for="pickProfile">Profile</label></div>
                        <div class="pick-row"><button type="button" id="pickSolids" class="tool off"><svg><use href="#i-cursor-off"/></svg></button><label for="pickSolids">Solids</label></div>
                        <fieldset class="output">
                            <legend>Output</legend>
                            <button type="button" class="tool on" aria-label="Solid"><svg><use href="#i-ybox"/></svg></button>
                            <button type="button" class="tool" aria-label="Surface"><svg><use href="#i-surf"/></svg></button>
                        </fieldset>
                    </div>
                    <fieldset class="operation">
                        <button type="button" class="tool on" aria-label="Join"><svg><use href="#i-join"/></svg></button>
                        <button type="button" class="tool" aria-label="Cut"><svg><use href="#i-cut"/></svg></button>
                        <button type="button" class="tool" aria-label="Intersect"><svg><use href="#i-intersect"/></svg></button>
                        <button type="button" class="tool new-solid" aria-label="New solid"><svg><use href="#i-newsolid"/></svg></button>
                    </fieldset>
                    <div class="col-right">
                        <fieldset class="extents">
                            <legend>Extents</legend>
                            <span class="combo"><select aria-label="Extents"><option>Distance</option></select></span>
                            <div class="distance"><input type="text" value="30" aria-label="Distance value"><button type="button" aria-label="Distance menu"><span class="arrow-right"></span></button></div>
                            <div class="dirs">
                                <button type="button" class="tool on" aria-label="Direction 1"><svg><use href="#i-dir1"/></svg></button>
                                <button type="button" class="tool" aria-label="Direction 2"><svg><use href="#i-dir2"/></svg></button>
                                <button type="button" class="tool" aria-label="Symmetric"><svg><use href="#i-dir3"/></svg></button>
                                <button type="button" class="tool" aria-label="Asymmetric"><svg><use href="#i-dir4"/></svg></button>
                            </div>
                        </fieldset>
                        <label class="match"><input type="checkbox" disabled>Match shape</label>
                    </div>
                </div>
                <div class="dialog-foot">
                    <button type="button" class="help" aria-label="Help"><svg><use href="#i-help"/></svg></button>
                    <label class="preview"><input type="checkbox" checked aria-label="Preview"><svg><use href="#i-glasses"/></svg></label>
                    <button type="button" class="btn" disabled>OK</button>
                    <button type="button" class="btn">Cancel</button>
                </div>
                <button type="button" class="expander" aria-label="Collapse"><span></span></button>
            </div>
        </form>
    </div>
</body>
</html>
```
FILE: styles.css
```css
* {
    box-sizing: border-box;
}
body {
    margin: 0;
    font-family: Roboto, "Open Sans", sans-serif;
    font-size: 10px;
    color: #2e3338;
    overflow: hidden;
}
button {
    font: inherit;
    color: inherit;
    padding: 0;
    border: 0;
    background: none;
    display: flex;
    align-items: center;
    justify-content: center;
}
a {
    color: inherit;
    text-decoration: none;
}
input, select {
    font: inherit;
    color: inherit;
    border: 0;
    margin: 0;
    padding: 0;
    min-width: 0;
}
fieldset {
    margin: 0;
    padding: 0;
    min-width: 0;
    border: 1px solid #dde3ea;
    border-radius: 3px;
}
svg {
    display: block;
    flex: none;
    width: 14px;
    height: 14px;
}
.sprite {
    position: absolute;
    width: 0;
    height: 0;
}
/* keeps outlines 1px wide on icons used at several sizes */
.hair {
    vector-effect: non-scaling-stroke;
}
.app {
    height: 100vh;
    display: flex;
    flex-direction: column;
    position: relative;
    background: #f0f0f0;
}
.caret {
    display: inline-block;
    border: 3px solid transparent;
    border-top: 4px solid currentColor;
    border-bottom: 0;
}
.arrow-right {
    border: 4px solid transparent;
    border-left: 5px solid #111;
    border-right: 0;
}

/* Title bar */
.header {
    display: flex;
    height: 34px;
    background: #3f3f3f;
}
.app-menu {
    display: grid;
    grid-template-columns: 22px 8px;
    width: 33px;
    border: 1px solid #222;
    background: linear-gradient(#9a9a9a, #5a5a5a);
    align-content: start;
    justify-content: start;
    align-items: center;
}
.app-menu .caret {
    border-width: 3px 2px 0;
    margin-left: 2px;
    color: #222;
}
.app-logo {
    width: 22px;
    height: 24px;
    margin-left: 2px;
}
.pro {
    font-size: 7px;
    line-height: 7px;
    grid-column: 1;
    font-weight: bold;
    color: #111;
}
.bars {
    flex: 1;
    display: flex;
    flex-direction: column;
    min-width: 0;
}
.titlebar {
    display: flex;
    height: 19px;
    background: linear-gradient(90deg, #1d4f8c, #255f9f 80%, #123d73);
}
.quick, .info {
    display: flex;
    align-items: center;
    background: linear-gradient(#8c8c8c, #666);
}
.quick {
    width: 459px;
    padding-left: 6px;
    gap: 2px;
}
.ico {
    width: 17px;
}
.quick .ico:nth-of-type(n+3) {
    width: 18px;
}
.dot-caret {
    border: 2px solid transparent;
    border-top-color: #333;
    border-bottom: 0;
}
.vline {
    width: 1px;
    height: 12px;
    background: #555;
    margin: 0 3px;
}
.combo {
    display: flex;
    align-items: center;
    position: relative;
    width: 78px;
    height: 16px;
    background: linear-gradient(#d9d9d9, #b9b9b9);
    color: #1a1a1a;
}
.combo select {
    flex: 1;
    appearance: none;
    background: none;
    padding-left: 5px;
}
.combo::after {
    content: "";
    position: absolute;
    right: 3px;
    top: 6px;
    border: 3px solid transparent;
    border-top: 4px solid #111;
    border-bottom: 0;
    pointer-events: none;
}
.with-icon select {
    padding-left: 2px;
}
.fx {
    font-family: "Liberation Serif", serif;
    font-style: italic;
    font-size: 13px;
    color: #222;
}
.cross {
    color: #555;
    font-size: 16px;
}
.dark {
    color: #111;
}
.doc-title {
    flex: 1;
    padding-left: 14px;
    text-align: center;
    line-height: 19px;
    color: #0a1526;
    text-shadow: 0 0 4px #5f92cc;
}
.info {
    width: 384px;
    padding-left: 4px;
    gap: 2px;
    color: #eee;
    background: linear-gradient(#8c8c8c, #5c5c5c);
}
.info .arrow-right {
    margin-right: 1px;
}
.search {
    width: 142px;
    height: 16px;
    background: #f6f6f6;
    padding-left: 2px;
    color: #333;
}
.search::placeholder {
    font-style: italic;
    color: #777;
}
.signin {
    gap: 3px;
    margin-right: auto;
}
.help-round {
    width: 13px;
    height: 13px;
    border-radius: 50%;
    background: #fff;
    color: #2347a0;
    font-size: 11px;
    font-weight: bold;
}
.info .dot-caret:last-child {
    margin: 0 4px;
}
.window-buttons {
    display: flex;
    width: 99px;
    padding-left: 14px;
}
.window-buttons button {
    width: 24px;
    height: 14px;
    border: 1px solid #a4c0de;
    border-top: 0;
    background: #3a6ca6;
}
.window-buttons button:first-child {
    border-radius: 0 0 0 5px;
}
.window-buttons .close {
    flex: 1;
    background: linear-gradient(#d98070, #b5281c);
    border-radius: 0 0 5px 0;
}
.window-buttons svg {
    width: 10px;
    height: 10px;
}
.tabs {
    display: flex;
    flex: 1;
    color: #eee;
    line-height: 15px;
    padding-left: 2px;
}
.tabs a {
    padding: 0 7px;
    white-space: nowrap;
}
.tabs .active {
    margin-right: 1px;
    background: linear-gradient(#c6c6c6, #efefef);
    color: #2a2a2a;
}
.ribbon-toggle {
    margin-left: 18px;
}
.ribbon-toggle span {
    width: 11px;
    height: 6px;
    border-radius: 2px;
    background: #eee;
}
.ribbon-toggle::after {
    content: "";
    margin-left: 4px;
    border: 2px solid transparent;
    border-top: 3px solid #eee;
    border-bottom: 0;
}

/* Ribbon */
.ribbon {
    display: flex;
    height: 76px;
    border-bottom: 2px solid #7f93a8;
    background: linear-gradient(90deg, transparent 85%, rgba(80, 80, 80, 0.4)), linear-gradient(#999, #bbb);
}
.panel {
    display: flex;
    flex-direction: column;
    background: #fdfdfd;
    border-right: 1px solid #b9bcc0;
}
.panel h2 {
    margin: 0;
    height: 14px;
    line-height: 14px;
    font-size: 10px;
    font-weight: normal;
    text-align: center;
    background: #ececec;
}
.panel h2 .caret {
    margin: 0 0 1px 3px;
}
.tools {
    flex: 1;
    display: grid;
    padding-top: 2px;
}
.stack {
    display: flex;
    flex-direction: column;
}
.stack button {
    height: 19px;
    gap: 3px;
    justify-content: flex-start;
    white-space: nowrap;
}
.stack .caret {
    border-width: 3px 2px 0;
    margin-left: 3px;
}
.big {
    flex-direction: column;
    justify-content: flex-start;
    padding-top: 2px;
    line-height: 12px;
    white-space: nowrap;
    position: relative;
}
.big svg {
    width: 26px;
    height: 26px;
    margin-bottom: 3px;
}
.big .caret {
    border-width: 3px 2px 0;
    margin-top: 3px;
}
.big .side {
    position: absolute;
    right: 4px;
    bottom: 14px;
}
.selected {
    background: #b4d4f2;
    border: 1px solid #5f93c8;
    padding-top: 1px;
}
.p-sketch { width: 63px; }
.p-prim { width: 51px; }
.p-create { width: 187px; }
.p-create .tools { grid-template-columns: 37px 37px 52px 1fr; padding-left: 1px; column-gap: 1px; }
.p-modify { width: 269px; }
.p-modify .tools { grid-template-columns: 34px 30px 63px 63px 1fr; padding-left: 1px; }
.p-modify .big svg { width: 24px; height: 24px; margin: 1px 0 4px; }
.p-work { width: 102px; }
.p-work .tools { grid-template-columns: 46px 1fr; }
.p-pattern { width: 79px; }
.p-pattern .tools, .p-surface .tools, .p-plastic .tools, .p-harness .tools { padding-left: 5px; }
.p-surface { width: 168px; }
.p-surface .tools { grid-template-columns: 91px 1fr; }
.p-plastic { width: 114px; }
.p-plastic .tools { grid-template-columns: 44px 1fr; }
.p-harness { width: 71px; }
.p-convert { width: 58px; }

/* Model browser */
.main {
    flex: 1;
    display: flex;
    min-height: 0;
}
.browser {
    width: 197px;
    padding: 2px 2px 4px 2px;
    display: flex;
    flex-direction: column;
    border-right: 1px solid #8d99a6;
}
.grip {
    display: flex;
    align-items: center;
    height: 10px;
    gap: 3px;
}
.grip span {
    flex: 1;
    height: 3px;
    border: 1px solid #bbb;
    border-width: 1px 0;
}
.grip button {
    width: 10px;
    font-size: 12px;
    line-height: 10px;
    font-weight: bold;
}
.browser-head {
    display: flex;
    align-items: center;
    gap: 3px;
    height: 15px;
    margin-top: 1px;
    padding: 0 2px 0 7px;
    background: #a8a8a8;
    color: #fff;
    font-size: 11px;
    font-weight: bold;
}
.browser-head button {
    margin-left: auto;
}
.browser-head svg, .browser-tools svg {
    width: 12px;
    height: 12px;
}
.browser-tools {
    display: flex;
    height: 22px;
    align-items: center;
    color: #111;
}
.browser-tools button {
    padding: 0 6px 0 4px;
}
.browser-tools button + button {
    padding: 0 6px;
    border-left: 1px solid #aaa;
}
.tree {
    flex: 1;
    background: #fff;
    border: 1px solid #777;
    font-size: 9px;
    color: #222;
}
.tree ul {
    list-style: none;
    margin: 0;
    padding: 0 0 0 19px;
}
.tree ul ul {
    padding-left: 15px;
}
.tree > ul {
    display: flex;
    flex-direction: column;
    gap: 1px;
}
.tree li {
    position: relative;
}
.node {
    display: flex;
    align-items: center;
    gap: 2px;
    height: 14px;
    line-height: 14px;
    white-space: nowrap;
}
.node svg {
    width: 13px;
    height: 13px;
}
.root {
    padding-left: 4px;
}
/* connector lines */
.tree li::before {
    content: "";
    position: absolute;
    left: -12px;
    top: -7px;
    width: 10px;
    height: 14px;
    border: 1px solid #aaa;
    border-width: 0 0 1px 1px;
}
.tree li + li::before {
    top: -8px;
    height: 15px;
}
.tree .opened + li::before {
    top: -106px;
    height: 113px;
}
.tree .closed::after, .tree .opened::after {
    content: "";
    position: absolute;
    left: -16px;
    top: 2px;
    width: 9px;
    height: 9px;
    border: 1px solid #999;
    background: linear-gradient(#333, #333) center / 5px 1px no-repeat, #fff;
}
.tree .closed::after {
    background: linear-gradient(#333, #333) center / 5px 1px no-repeat, linear-gradient(#333, #333) center / 1px 5px no-repeat, #fff;
}

/* Viewport */
.workspace {
    flex: 1;
    display: flex;
    flex-direction: column;
    min-width: 0;
}
.viewport {
    flex: 1;
    position: relative;
    min-height: 0;
    overflow: hidden;
    background: linear-gradient(#7dbcff, #a6d1fb 50%, #cde1f8);
    border-bottom: 1px solid #fff;
}
.scene {
    position: absolute;
    left: 0;
    top: 0;
    width: 1083px;
    height: 572px;
}
.dims {
    font-size: 10px;
    fill: #1c2734;
}
.triad {
    font-size: 9px;
}
.mini {
    position: absolute;
    left: 543px;
    top: 26px;
    display: flex;
    flex-direction: column;
    gap: 7px;
    font-size: 9px;
}
.mini-row {
    display: flex;
    gap: 3px;
}
.indent {
    padding-left: 10px;
    gap: 7px;
}
.mini-grip {
    width: 7px;
    height: 17px;
    border: 1px solid #8a97a6;
    border-radius: 3px;
    background: #d5dbe1;
}
.pill {
    display: flex;
    height: 17px;
    border: 1px solid #7c8896;
    border-radius: 9px;
    background: linear-gradient(#f2f3f5, #c9cdd2);
    overflow: hidden;
}
.pill button {
    padding: 0 4px;
    gap: 2px;
}
.pill button + button {
    border-left: 1px solid #7c8896;
}
.pill .caret {
    color: #222;
}
.value input {
    width: 72px;
    margin: 1px 0 1px 8px;
    padding-left: 2px;
    background: #fff;
}
.value button:first-child {
    border-right: 1px solid #7c8896;
    padding: 0 5px 0 3px;
}
.value .more {
    padding: 0 2px 0 3px;
}
.profile {
    background: #7f9fdb;
    border-color: #5a7cbd;
}
.profile button {
    padding: 0 2px 0 3px;
}
.confirm {
    width: 47px;
}
.confirm button {
    flex: 1;
}
.confirm .off {
    background: #9dc8ea;
}
.doc-buttons {
    position: absolute;
    right: 2px;
    top: 5px;
    display: flex;
    gap: 6px;
}
.doc-buttons svg {
    width: 10px;
    height: 10px;
}
.viewcube {
    position: absolute;
    right: 20px;
    top: 34px;
    width: 60px;
    height: 68px;
}
.viewcube text {
    font-size: 8px;
    font-weight: bold;
    fill: #5c6b7a;
}
.navbar {
    position: absolute;
    right: 2px;
    top: 116px;
    width: 28px;
    height: 159px;
    padding: 1px 3px;
    display: flex;
    flex-direction: column;
    border: 1px solid #6c93c0;
    border-radius: 4px;
    background: #a9c9ea;
    color: #5a6a80;
}
.navbar button {
    flex-direction: column;
    gap: 3px;
    margin-bottom: 6px;
}
.navbar button:first-child, .navbar .last {
    align-self: flex-end;
    margin: 0;
}
.navbar button:first-child svg, .navbar .last svg {
    width: 8px;
    height: 8px;
}
.navbar .last {
    margin-top: auto;
}
.navbar .wheel {
    margin: 7px 0 4px;
}
.navbar .wheel svg {
    width: 20px;
    height: 20px;
}
.navbar .caret {
    border-width: 3px 2px 0;
}
.navbar hr {
    width: 100%;
    margin: 0 0 6px;
    border: 0;
    border-top: 1px solid #7f9cba;
}

/* Document tabs */
.doc-tabs {
    display: flex;
    height: 17px;
    border-top: 1px solid #666;
    background: linear-gradient(#c4c4c4, #dedede);
    line-height: 15px;
}
.doc-tabs .sq {
    width: 16px;
    background: #e4e4e4;
    border: 1px solid #444;
    border-top: 0;
}
.doc-tabs svg {
    width: 13px;
    height: 13px;
}
.doc-tabs a {
    height: 15px;
    padding: 0 5px;
    border: 1px solid #888;
    border-top: 0;
    border-radius: 0 0 5px 5px;
    background: #cfcfcf;
    display: flex;
    align-items: center;
    gap: 4px;
}
.doc-tabs a svg {
    width: 7px;
    height: 7px;
}
.doc-tabs .active {
    background: #fff;
}

.status {
    display: flex;
    align-items: center;
    height: 21px;
    padding: 2px 0 0 2px;
    background: linear-gradient(#f2f2f2, #bcbcbc);
    border-bottom: 2px solid #777;
}
.message {
    flex: 1;
}
.count {
    width: 30px;
    text-align: center;
}
.count:last-child {
    margin-right: 8px;
}

/* Extrude dialog */
.dialog {
    position: absolute;
    left: 100px;
    top: 219px;
    width: 269px;
    padding: 0 6px 5px 5px;
    border: 1px solid #5f7d96;
    border-radius: 5px;
    background: linear-gradient(90deg, #f4f7fa 90px, #a8d8fa 105px, #c0e8fa);
    box-shadow: 0 0 5px rgba(20, 40, 60, 0.6);
    font-size: 9px;
    color: #222;
}
.dialog-title {
    display: flex;
    align-items: flex-start;
    justify-content: space-between;
    height: 22px;
    line-height: 22px;
    padding-left: 1px;
}
.dialog-title button {
    width: 37px;
    height: 14px;
    border: 1px solid #8fb2cc;
    border-top: 0;
    border-radius: 0 0 3px 3px;
}
.dialog-title svg {
    width: 9px;
    height: 9px;
}
.dialog-inner {
    border: 1px solid #8a99a8;
    background: #f0f0f0;
}
.dialog-tabs {
    display: flex;
    align-items: flex-end;
    height: 19px;
}
.dialog-tabs button {
    height: 15px;
    width: 31px;
    border: 1px solid #999;
    border-width: 1px 1px 0 0;
    background: linear-gradient(#eee, #d0d0d0);
}
.dialog-tabs .active {
    position: relative;
    height: 18px;
    width: 36px;
    margin-bottom: -1px;
    background: #fff;
}
.dialog-body {
    display: flex;
    align-items: flex-start;
    gap: 6px;
    height: 143px;
    margin-right: 1px;
    padding: 10px 7px 0 6px;
    background: #fff;
    border: 1px solid #8c8c8c;
    border-width: 1px 1px 1px 0;
}
.col-left {
    width: 85px;
}
.pick-row {
    display: flex;
    align-items: center;
    gap: 8px;
    margin: 1px 0 7px;
}
.tool {
    width: 23px;
    height: 23px;
    border: 1px solid #7b7b7b;
    border-radius: 2px;
    background: linear-gradient(#f6f6f6, #cfcfcf);
}
.tool svg {
    width: 17px;
    height: 17px;
}
.tool.on {
    border-color: #2c628b;
    background: linear-gradient(#cfe7f7, #7ab4dc);
}
.tool.off {
    border-color: #bbb;
    background: #f6f6f6;
}
legend {
    margin-left: 4px;
    padding: 0 2px;
    line-height: 12px;
}
.output {
    display: flex;
    gap: 3px;
    width: 65px;
    height: 45px;
    padding: 6px 0 0 8px;
}
.output svg {
    width: 14px;
    height: 14px;
}
.operation {
    display: flex;
    flex-direction: column;
    width: 35px;
    padding: 7px 0 3px 6px;
}
.operation .new-solid {
    margin-top: 6px;
}
.col-right {
    flex: 1;
    margin-top: -7px;
}
.extents {
    height: 91px;
    padding: 6px 0 0 5px;
}
.extents .combo {
    width: 87px;
    height: 17px;
    border: 1px solid #777;
    border-radius: 2px;
    background: linear-gradient(#f4f4f4, #d4d4d4);
}
.extents select {
    padding-left: 2px;
}
.distance {
    display: flex;
    width: 87px;
    height: 17px;
    margin: 5px 0 6px;
    border: 1px solid #e2e2e2;
}
.distance input {
    flex: 1;
    padding-left: 4px;
}
.distance button {
    width: 14px;
    background: #eee;
}
.distance .arrow-right {
    border-width: 3px 0 3px 3px;
}
.dirs {
    display: flex;
    gap: 1px;
}
.match {
    display: flex;
    align-items: center;
    gap: 2px;
    margin-top: 13px;
    color: #777;
}
.match input, .preview input {
    appearance: none;
    width: 10px;
    height: 10px;
    border: 1px solid #aaa;
    background: #fff;
}
.preview input:checked::after {
    content: "✓";
    display: block;
    font-size: 10px;
    line-height: 8px;
    font-weight: bold;
    color: #27408f;
}
.dialog-foot {
    display: flex;
    align-items: center;
    height: 27px;
    padding: 0 5px 0 7px;
    gap: 4px;
}
.help {
    width: 17px;
    height: 17px;
    border: 1px solid #777;
    background: #ddd;
}
.help svg {
    width: 12px;
    height: 12px;
}
.preview {
    display: flex;
    align-items: center;
    gap: 5px;
    margin: 0 auto;
    padding: 2px 5px 2px 3px;
    border: 1px solid #e4e4e4;
}
.preview svg {
    width: 25px;
    height: 13px;
}
.btn {
    width: 58px;
    height: 17px;
    border: 1px solid #777;
    border-radius: 3px;
    background: linear-gradient(#f6f6f6, #d2d2d2);
}
.btn:disabled {
    border-color: #bbb;
    background: #f2f2f2;
    color: #8c8c8c;
}
.expander {
    width: 100%;
    height: 11px;
    border-top: 1px solid #888;
    background: linear-gradient(#f4f4f4, #d8d8d8);
}
.expander span {
    border: 4px solid transparent;
    border-bottom: 6px solid #000;
    border-top: 0;
}
```
